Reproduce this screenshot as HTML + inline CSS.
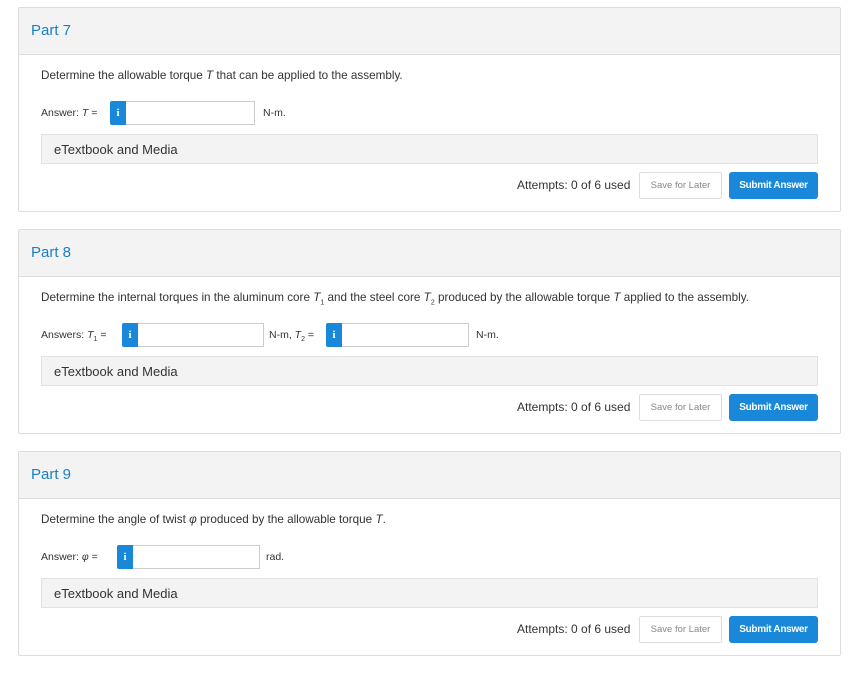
<!DOCTYPE html>
<html><head><style>
*{box-sizing:border-box;margin:0;padding:0}
body{width:865px;height:681px;background:#fff;font-family:"Liberation Sans",sans-serif;color:#333;position:relative;overflow:hidden}
.p{position:absolute;left:18px;width:823px;height:205px;border:1px solid #ddd;border-radius:2px;background:#fff}
.h{height:47px;background:#f3f3f3;border-bottom:1px solid #ddd;color:#1b7fc4;font-size:15px;padding:14px 0 0 12px}
.q{position:absolute;left:22px;top:61px;font-size:11.7px;color:#333;white-space:nowrap}
.a{position:absolute;top:93px;height:24px;font-size:10.5px;line-height:24px}
.i{position:absolute;top:93px;width:16px;height:24px;background:#1a88d8;color:#fff;font-weight:bold;font-size:11px;text-align:center;line-height:24px;font-family:"Liberation Serif",serif;border-radius:2px 0 0 2px}
.in{position:absolute;top:93px;height:24px;border:1px solid #ccc;border-left:none;background:#fff}
.e{position:absolute;left:22px;top:126px;width:777px;height:30px;background:#f3f3f3;border:1px solid #e2e2e2;font-size:13px;padding:7px 0 0 12px}
.at{position:absolute;left:498px;top:164px;height:27px;line-height:26px;font-size:12px;color:#333}
.s{position:absolute;left:620px;top:164px;width:83px;height:27px;border:1px solid #ddd;border-radius:2px;font-size:9.5px;color:#888;text-align:center;line-height:25px}
.b{position:absolute;left:710px;top:164px;width:89px;height:27px;background:#1a88d8;border-radius:3px;font-size:10px;color:#fff;font-weight:bold;text-align:center;line-height:27px;letter-spacing:-.3px}
</style></head><body>

<div class="p" style="top:7px">
<div class="h">Part 7</div>
<div class="q">Determine the allowable torque <i>T</i> that can be applied to the assembly.</div>
<div class="a" style="left:22px">Answer: <i>T</i> =</div>
<div class="i" style="left:91px">i</div><div class="in" style="left:107px;width:129px"></div>
<div class="a" style="left:244px">N-m.</div>
<div class="e">eTextbook and Media</div>
<div class="at">Attempts: 0 of 6 used</div><div class="s">Save for Later</div><div class="b">Submit Answer</div>
</div>

<div class="p" style="top:229px">
<div class="h">Part 8</div>
<div class="q">Determine the internal torques in the aluminum core <i>T</i><sub style="font-size:7px">1</sub> and the steel core <i>T</i><sub style="font-size:7px">2</sub> produced by the allowable torque <i>T</i> applied to the assembly.</div>
<div class="a" style="left:22px">Answers: <i>T</i><sub style="font-size:7px">1</sub> =</div>
<div class="i" style="left:103px">i</div><div class="in" style="left:119px;width:126px"></div>
<div class="a" style="left:250px">N-m, <i>T</i><sub style="font-size:7px">2</sub> =</div>
<div class="i" style="left:307px">i</div><div class="in" style="left:323px;width:127px"></div>
<div class="a" style="left:457px">N-m.</div>
<div class="e">eTextbook and Media</div>
<div class="at">Attempts: 0 of 6 used</div><div class="s">Save for Later</div><div class="b">Submit Answer</div>
</div>

<div class="p" style="top:451px">
<div class="h">Part 9</div>
<div class="q">Determine the angle of twist <i>φ</i> produced by the allowable torque <i>T</i>.</div>
<div class="a" style="left:22px">Answer: <i>φ</i> =</div>
<div class="i" style="left:98px">i</div><div class="in" style="left:114px;width:127px"></div>
<div class="a" style="left:247px">rad.</div>
<div class="e">eTextbook and Media</div>
<div class="at">Attempts: 0 of 6 used</div><div class="s">Save for Later</div><div class="b">Submit Answer</div>
</div>

</body></html>
